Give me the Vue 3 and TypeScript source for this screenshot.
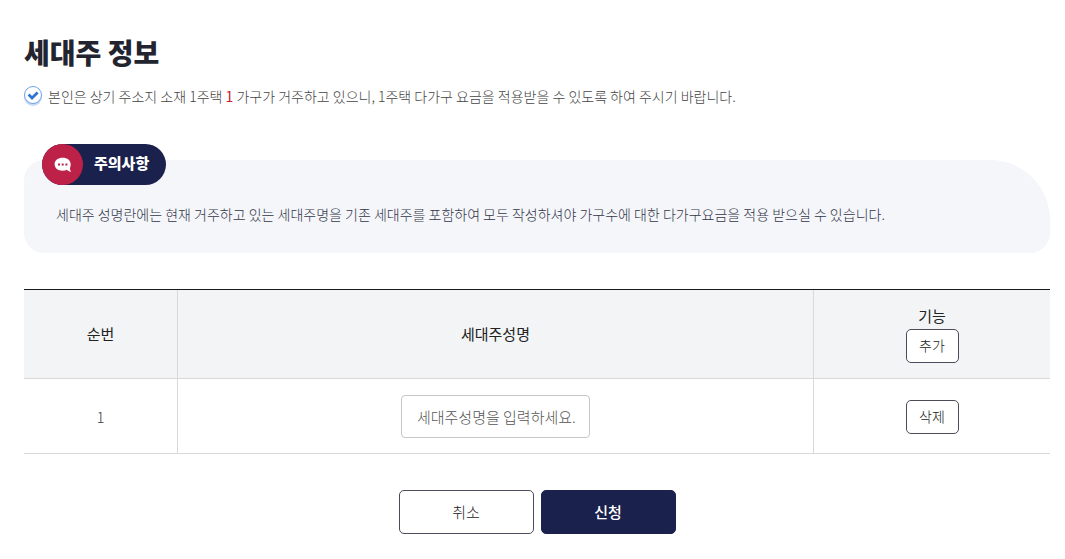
<script setup lang="ts">
import { ref } from 'vue'

interface Householder {
  id: number
  name: string
}

const rows = ref<Householder[]>([{ id: 1, name: '' }])
let nextId = 2

function addRow(): void {
  rows.value.push({ id: nextId++, name: '' })
}

function removeRow(id: number): void {
  rows.value = rows.value.filter((row) => row.id !== id)
}
</script>

<template>
  <main class="page">
    <h1 class="title">세대주 정보</h1>
    <p class="pledge">
      <svg class="check" viewBox="0 0 18 20" aria-hidden="true">
        <circle cx="9" cy="11" r="9" fill="#c5dbf5" />
        <circle cx="9" cy="9" r="8.5" fill="#fff" stroke="#6fa3e3" />
        <path d="M4.600 8.600l3.400 3.400 5.600-5.600" fill="none" stroke="#2f74d0" stroke-width="2.8" />
      </svg>
      <span>본인은 상기 주소지 소재 1주택 <em class="count">1</em> 가구가 거주하고 있으니, 1주택 다가구 요금을 적용받을 수 있도록 하여 주시기 바랍니다.</span>
    </p>

    <section class="notice">
      <h2 class="badge">
        <span class="badge-icon">
          <svg viewBox="0 0 18 16" aria-hidden="true">
            <path d="M8.700.8C4 .8.600 3.500.600 7.200s3.400 6.500 8.100 6.500c1.500 0 2.900-.3 4.100-.9 1 1 2.300 1.800 4.500 2.100-.8-1-1.300-2.100-1.400-3.500.5-1.200.8-2.500.8-4C16.700 3.500 13.300.8 8.700.8z" fill="#fff" />
            <path d="M4 6.500h2v2H4zM7.700 6.500h2v2h-2zM11.400 6.500h2v2h-2z" fill="#bd2148" />
          </svg>
        </span>
        <span class="badge-text">주의사항</span>
      </h2>
      <p class="notice-text">세대주 성명란에는 현재 거주하고 있는 세대주명을 기존 세대주를 포함하여 모두 작성하셔야 가구수에 대한 다가구요금을 적용 받으실 수 있습니다.</p>
    </section>

    <form @submit.prevent>
      <table class="grid">
        <colgroup>
          <col class="col-no" />
          <col class="col-name" />
          <col class="col-action" />
        </colgroup>
        <thead>
          <tr>
            <th scope="col">순번</th>
            <th scope="col">세대주성명</th>
            <th scope="col">
              <span class="action-label">기능</span>
              <button type="button" class="small" @click="addRow">추가</button>
            </th>
          </tr>
        </thead>
        <tbody>
          <tr v-for="(row, index) in rows" :key="row.id">
            <td>{{ index + 1 }}</td>
            <td>
              <input
                v-model="row.name"
                class="name"
                type="text"
                aria-label="세대주성명"
                placeholder="세대주성명을 입력하세요."
              />
            </td>
            <td><button type="button" class="small" @click="removeRow(row.id)">삭제</button></td>
          </tr>
        </tbody>
      </table>

      <div class="actions">
        <button type="button" class="large">취소</button>
        <button type="submit" class="large primary">신청</button>
      </div>
    </form>
  </main>
</template>

<style>
body {
  margin: 0;
  background: #fff;
}
</style>

<style scoped>
.page {
  padding: 32px 15px 24px 24px;
  font-family: "Noto Sans CJK KR", "Noto Sans", sans-serif;
  font-size: 15px;
  font-weight: 300;
  line-height: 24px;
  color: #444;
}

.title {
  margin: 0;
  font-size: 28px;
  font-weight: 900;
  line-height: 40px;
  color: #222430;
}

.pledge {
  display: flex;
  align-items: center;
  gap: 6px;
  margin: 12px 0 0;
  font-size: 14px;
}

.check {
  flex: none;
  width: 18px;
  height: 20px;
}

.count {
  font-style: normal;
  font-weight: 400;
  color: #c8202f;
}

.notice {
  position: relative;
  margin-top: 52px;
  padding: 42px 32px 27px;
  border-radius: 20px 60px 20px 20px;
  background: #f4f6fa;
}

.badge {
  position: absolute;
  top: -16px;
  left: 18px;
  display: flex;
  align-items: center;
  margin: 0;
  padding-right: 17px;
  border-radius: 21px;
  background: #1b214d;
  color: #fff;
  font-size: 15px;
  font-weight: 900;
  line-height: 24px;
}

.badge-icon {
  display: flex;
  align-items: center;
  justify-content: center;
  width: 41px;
  height: 41px;
  margin-right: 11px;
  border-radius: 50%;
  background: #bd2148;
}

.badge-icon svg {
  width: 18px;
  height: 16px;
}

.badge-text {
  padding-bottom: 3px;
}

.notice-text {
  margin: 0;
  font-size: 14px;
  color: #333548;
}

.grid {
  width: 100%;
  margin-top: 36px;
  border-collapse: separate;
  border-spacing: 0;
  border-top: 1px solid #1a1a1a;
  table-layout: fixed;
  text-align: center;
}

.col-no {
  width: 15%;
}

.col-name {
  width: 62%;
}

.col-action {
  width: 23%;
}

.grid th,
.grid td {
  padding: 16px 16px 15px;
  border-right: 1px solid #d9d9d9;
  border-bottom: 1px solid #d9d9d9;
  vertical-align: middle;
}

.grid th:last-child,
.grid td:last-child {
  border-right: 0;
}

.grid th {
  padding: 14px 16px 15px;
  background: #f3f4f6;
  color: #222;
  font-weight: 400;
}

.action-label {
  display: block;
  margin-bottom: 1px;
}

button,
input {
  box-sizing: border-box;
  font: inherit;
}

button {
  border: 1px solid #4d4b59;
  border-radius: 5px;
  background: #fff;
  color: #222;
  cursor: pointer;
}

.small {
  display: block;
  width: 53px;
  height: 34px;
  margin: 0 auto;
  padding: 0 0 2px;
  font-size: 14px;
  font-weight: 300;
}

.name {
  display: block;
  width: 189px;
  height: 43px;
  margin: 0 auto;
  padding: 0 8px 0 15px;
  border: 1px solid #c6c6c6;
  border-radius: 4px;
  background: #fff;
  color: #333;
}

.name::placeholder {
  color: #555;
  opacity: 1;
}

.actions {
  display: flex;
  justify-content: center;
  gap: 7px;
  margin-top: 36px;
}

.large {
  width: 135px;
  height: 44px;
}

.primary {
  border-color: #1b214d;
  background: #1b214d;
  color: #fff;
  font-weight: 500;
}
</style>
